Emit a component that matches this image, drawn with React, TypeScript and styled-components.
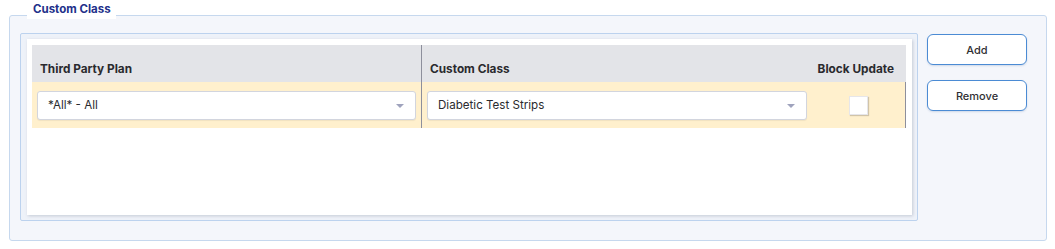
import styled, { createGlobalStyle } from "styled-components";

const GlobalStyle = createGlobalStyle`
    body {
        margin: 0;
        background: #ffffff;
        font-family: Inter, "Noto Sans", sans-serif;
    }
`;

const Page = styled.div`
    padding: 15px 8px 7px 9px;
`;

const Fieldset = styled.section`
    position: relative;
    display: flex;
    gap: 9px;
    height: 226px;
    box-sizing: border-box;
    padding: 17px 19px 19px 10px;
    background: #f4f6fb;
    border: 1px solid #c6d8ee;
    border-radius: 3px;
`;

const Legend = styled.div`
    position: absolute;
    top: -16px;
    left: 17px;
    height: 19px;
    padding: 0 5px 0 6px;
    background: #ffffff;
    font-size: 11.5px;
    font-weight: 700;
    line-height: 19px;
    color: #22308a;
`;

const Panel = styled.div`
    flex: 1;
    padding: 5px 5px 5px 6px;
    border: 1px solid #bcd2ee;
    border-radius: 2px;
    background: #eef2f9;
`;

const Sheet = styled.div`
    height: 100%;
    box-sizing: border-box;
    padding: 6px 6px 0 5px;
    background: #ffffff;
    box-shadow: 1px 1px 3px rgba(120, 130, 150, 0.35);
`;

const Grid = styled.div`
    display: grid;
    grid-template-columns: 390px 390px 1fr;
`;

const HeadCell = styled.div<{ $end?: boolean; $divider?: boolean }>`
    height: 37px;
    box-sizing: border-box;
    display: flex;
    align-items: flex-end;
    justify-content: ${(p) => (p.$end ? "flex-end" : "flex-start")};
    padding: ${(p) => (p.$end ? "0 12px 6px 0" : "0 12px 6px 8px")};
    background: #e3e4e8;
    border-right: ${(p) => (p.$divider ? "1px solid #8d8f9c" : "none")};
    white-space: nowrap;
    font-size: 11.8px;
    font-weight: 700;
    color: #2a2a2e;
`;

const RowCell = styled.div<{ $center?: boolean; $divider?: boolean }>`
    height: 46px;
    box-sizing: border-box;
    display: flex;
    align-items: center;
    justify-content: ${(p) => (p.$center ? "center" : "flex-start")};
    padding: 0 5px;
    background: #fff0cd;
    border-right: ${(p) => (p.$divider ? "1px solid #8d8f9c" : "none")};
`;

const Select = styled.div`
    flex: 1;
    height: 29px;
    box-sizing: border-box;
    display: flex;
    align-items: center;
    justify-content: space-between;
    padding: 0 11px 0 10px;
    background: #ffffff;
    border: 1px solid #d2d5de;
    border-radius: 3px;
    box-shadow: 0 1px 1px rgba(0, 0, 0, 0.06);
    font-size: 11.6px;
    color: #2a2a2e;
`;

const Caret = styled.span`
    width: 0;
    height: 0;
    margin-top: 2px;
    border-left: 4px solid transparent;
    border-right: 4px solid transparent;
    border-top: 4px solid #9fa3bd;
`;

const Checkbox = styled.div`
    width: 17px;
    height: 17px;
    margin-right: 1px;
    background: #ffffff;
    border: 1px solid #e6e6ea;
    box-shadow: 1px 1px 1px rgba(0, 0, 0, 0.18);
`;

const Actions = styled.div`
    display: flex;
    flex-direction: column;
    gap: 15px;
    width: 100px;
    padding-top: 1px;
`;

const Button = styled.button`
    height: 31px;
    background: #ffffff;
    border: 1px solid #4b8bd4;
    border-radius: 6px;
    box-shadow: 0 1px 2px rgba(60, 100, 160, 0.2);
    font-family: Inter, "Noto Sans", sans-serif;
    font-size: 11px;
    font-weight: 500;
    color: #2f2f33;
    cursor: pointer;
`;

export default function App() {
    return (
        <>
            <GlobalStyle />
            <Page>
                <Fieldset>
                    <Legend>Custom Class</Legend>
                    <Panel>
                        <Sheet>
                            <Grid>
                                <HeadCell $divider>Third Party Plan</HeadCell>
                                <HeadCell>Custom Class</HeadCell>
                                <HeadCell $end>Block Update</HeadCell>

                                <RowCell $divider>
                                    <Select>
                                        <span>*All* - All</span>
                                        <Caret />
                                    </Select>
                                </RowCell>
                                <RowCell>
                                    <Select>
                                        <span>Diabetic Test Strips</span>
                                        <Caret />
                                    </Select>
                                </RowCell>
                                <RowCell $center $divider>
                                    <Checkbox />
                                </RowCell>
                            </Grid>
                        </Sheet>
                    </Panel>
                    <Actions>
                        <Button>Add</Button>
                        <Button>Remove</Button>
                    </Actions>
                </Fieldset>
            </Page>
        </>
    );
}
